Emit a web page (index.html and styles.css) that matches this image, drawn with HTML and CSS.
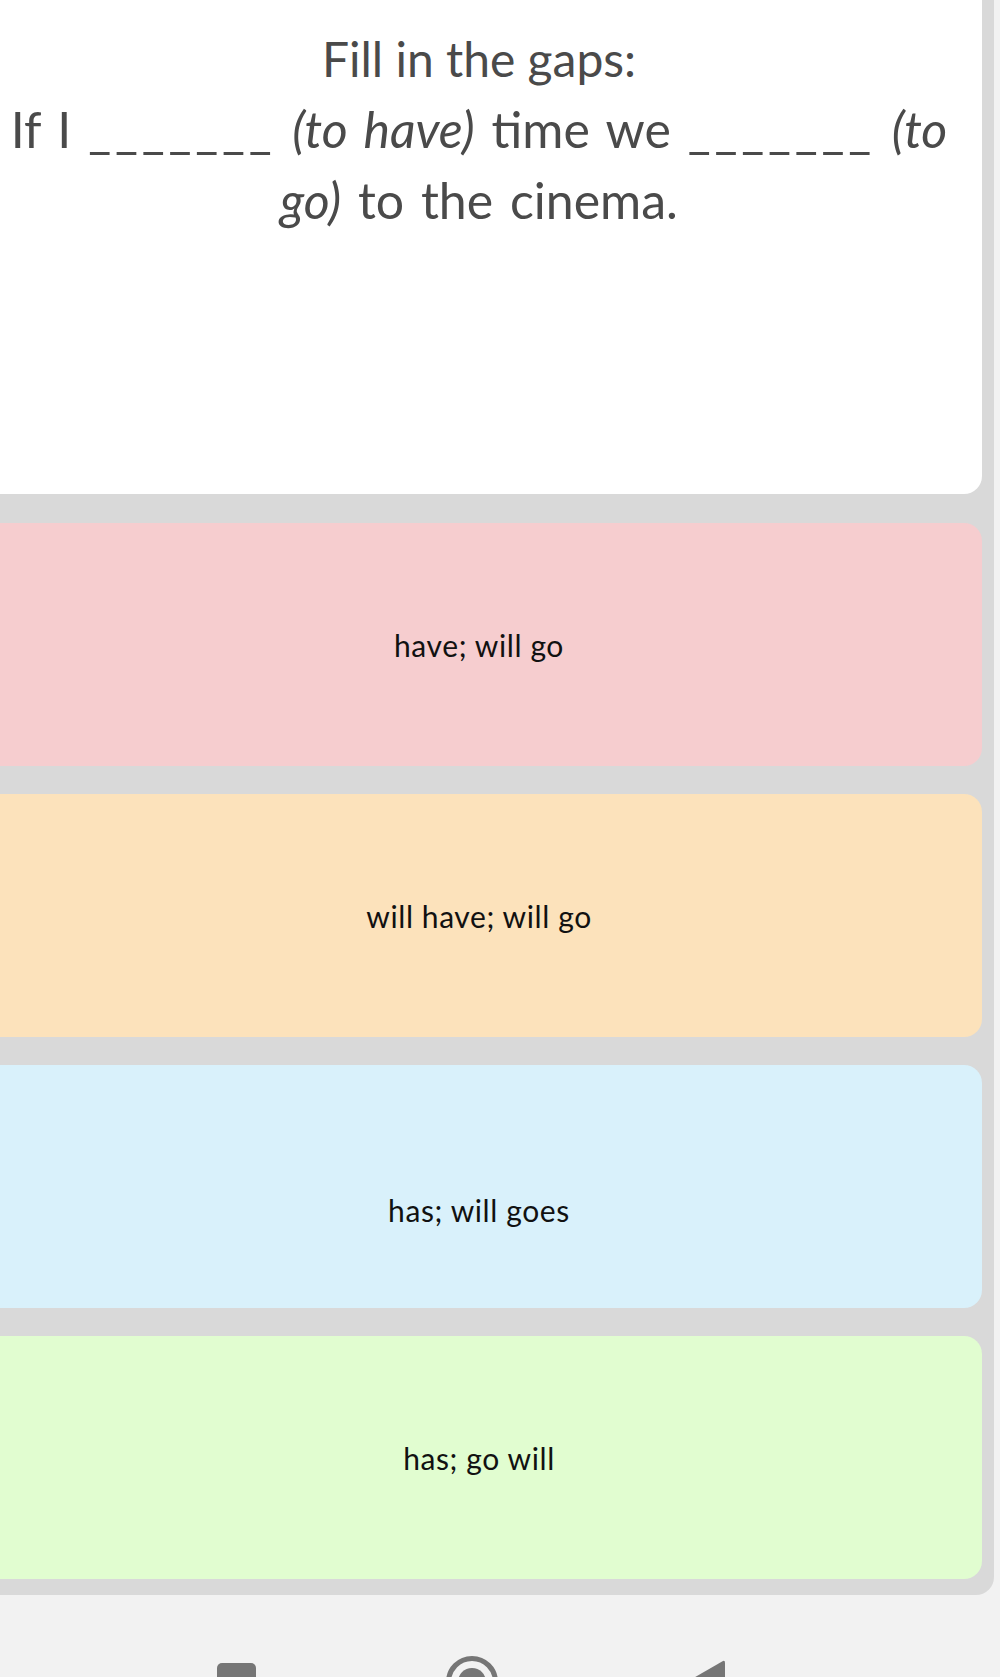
FILE: index.html
```html
<!DOCTYPE html>
<html lang="en">
<head>
<meta charset="utf-8">
<title>Fill in the gaps</title>
<link rel="stylesheet" href="styles.css">
</head>
<body>
<div class="screen">
  <section class="question">
    <p class="question-text"><span class="question-title">Fill in the gaps:</span><br>If I <span class="blank">_______</span> <em>(to have)</em> time we <span class="blank">_______</span> <em>(to go)</em> to the cinema.</p>
  </section>
  <div class="answers">
    <div class="answer answer-pink"><span class="answer-text">have; will go</span></div>
    <div class="answer answer-orange"><span class="answer-text">will have; will go</span></div>
    <div class="answer answer-blue"><span class="answer-text">has; will goes</span></div>
    <div class="answer answer-green"><span class="answer-text">has; go will</span></div>
  </div>
</div>
<nav class="navbar">
  <svg class="nav-icon nav-recent" width="39" height="39" viewBox="0 0 39 39"><rect x="0" y="0" width="39" height="39" rx="5" fill="#767676"/></svg>
  <svg class="nav-icon nav-home" width="52" height="52" viewBox="0 0 52 52"><circle cx="26" cy="26" r="23.5" fill="none" stroke="#767676" stroke-width="5"/><circle cx="26" cy="26" r="14" fill="#767676"/></svg>
  <svg class="nav-icon nav-back" width="37" height="44" viewBox="0 0 37 44"><path d="M35 1 Q37 0 37 3 L37 41 Q37 44 35 43 L2 24 Q0 22 2 20 Z" fill="#767676"/></svg>
</nav>
</body>
</html>
```

FILE: styles.css
```css
html, body {
  margin: 0;
  padding: 0;
}
body {
  background: #f2f2f2;
  width: 1000px;
  height: 1677px;
  overflow: hidden;
}
.screen {
  width: 994px;
  background: #d9d9d9;
  border-bottom-right-radius: 18px;
  padding-bottom: 16px;
}
.question {
  width: 982px;
  height: 494px;
  box-sizing: border-box;
  background: #ffffff;
  border-bottom-right-radius: 18px;
  padding: 23px 32px 0 8px;
}
.question-text {
  margin: 0;
  font-family: Lato, "Noto Sans", sans-serif;
  font-size: 50px;
  line-height: 71px;
  word-spacing: 4px;
  color: #4a4a4a;
  text-align: center;
}
.question-title {
  font-size: 48px;
  word-spacing: 0;
}
.question-text em {
  font-style: italic;
}
.blank {
  letter-spacing: 3.8px;
}
.answers {
  display: flex;
  flex-direction: column;
  gap: 28px;
  margin-top: 29px;
}
.answer {
  width: 982px;
  height: 243px;
  box-sizing: border-box;
  border-radius: 0 18px 18px 0;
  display: flex;
  align-items: center;
  justify-content: center;
  padding-right: 34px;
  padding-left: 10px;
}
.answer-text {
  font-family: Lato, "Noto Sans", sans-serif;
  font-size: 30px;
  letter-spacing: 0.6px;
  color: #111111;
}
.answer-pink { background: #f6cdcf; }
.answer-orange { background: #fce2bb; }
.answer-blue { background: #d9f1fb; padding-top: 46px; }
.answer-green { background: #e1fdd0; }
.navbar {
  display: flex;
  align-items: flex-start;
  gap: 190px;
  padding-left: 217px;
  padding-top: 61px;
}
.nav-icon { display: block; flex: none; }
.nav-recent { margin-top: 7px; }
.nav-back { margin-top: 4px; }
```
